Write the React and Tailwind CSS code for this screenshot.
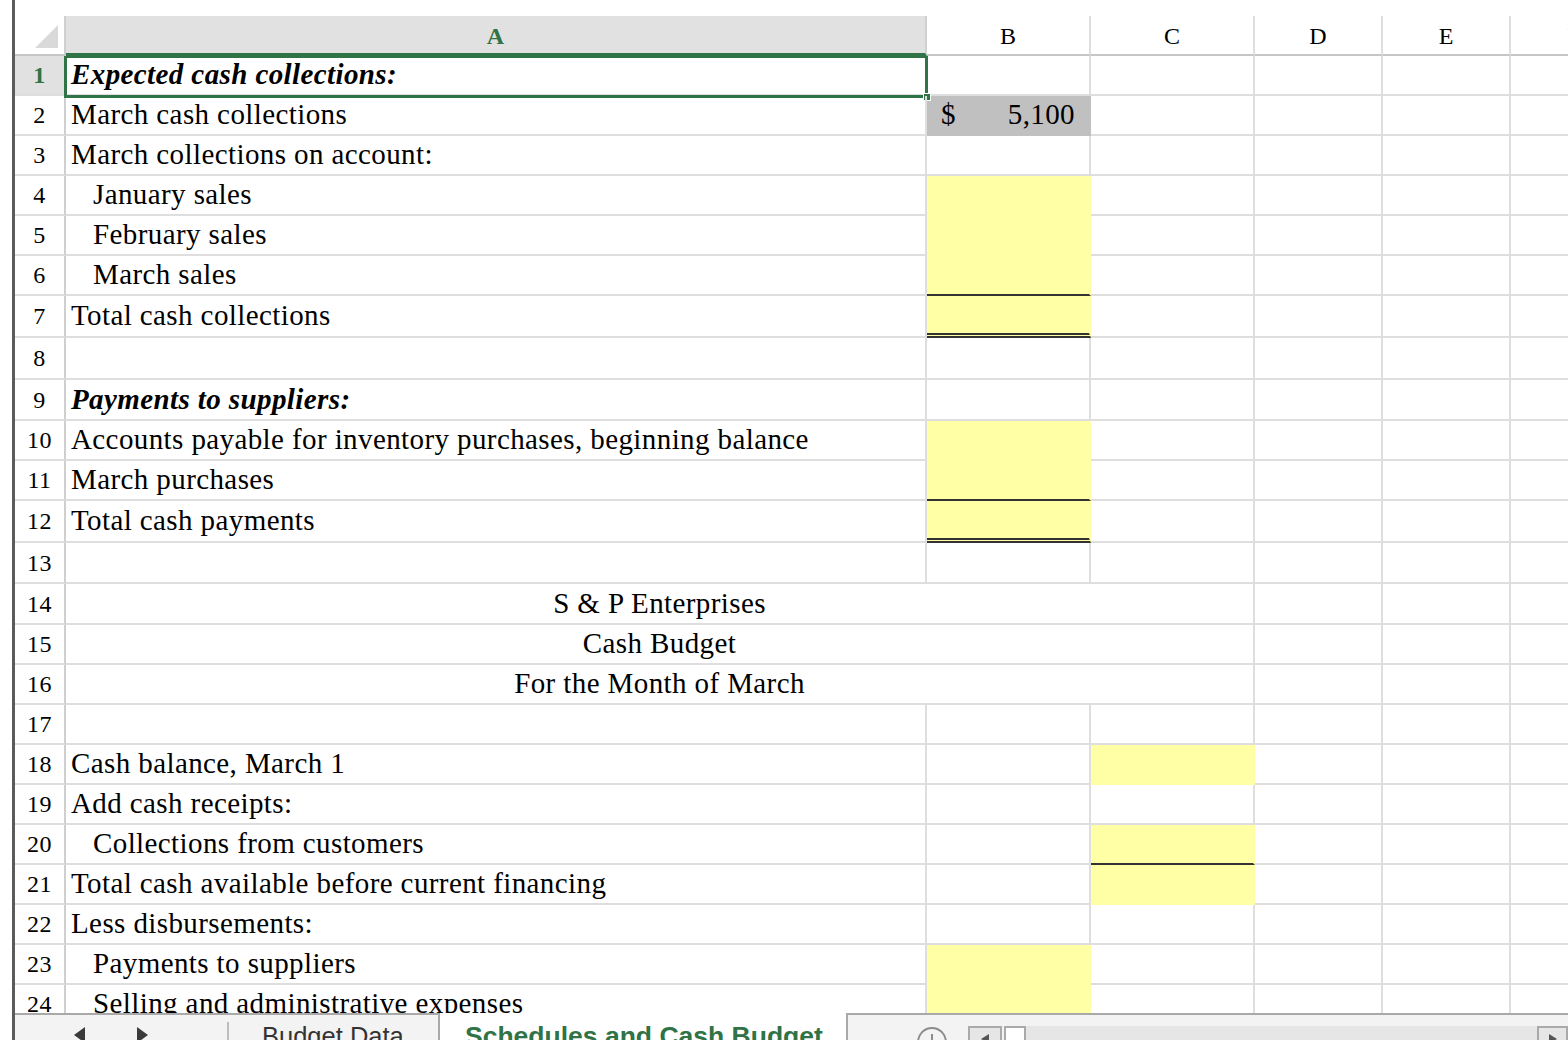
import React from 'react';

const YELLOW = 'bg-[#ffffa6]';

// row data: h = row height incl. bottom gridline
const rows = [
  { n: 1, h: 40, a: 'Expected cash collections:', bi: true },
  { n: 2, h: 40, a: 'March cash collections', b: { fill: 'gray', amount: '5,100' } },
  { n: 3, h: 40, a: 'March collections on account:' },
  { n: 4, h: 40, a: 'January sales', indent: true, b: { fill: 'yellow', join: true } },
  { n: 5, h: 40, a: 'February sales', indent: true, b: { fill: 'yellow', join: true } },
  { n: 6, h: 40, a: 'March sales', indent: true, b: { fill: 'yellow', line: 'single' } },
  { n: 7, h: 42, a: 'Total cash collections', b: { fill: 'yellow', line: 'double' } },
  { n: 8, h: 42 },
  { n: 9, h: 41, a: 'Payments to suppliers:', bi: true },
  { n: 10, h: 40, a: 'Accounts payable for inventory purchases, beginning balance', b: { fill: 'yellow', join: true } },
  { n: 11, h: 40, a: 'March purchases', b: { fill: 'yellow', line: 'single' } },
  { n: 12, h: 42, a: 'Total cash payments', b: { fill: 'yellow', line: 'double' } },
  { n: 13, h: 41 },
  { n: 14, h: 41, merged: 'S & P Enterprises' },
  { n: 15, h: 40, merged: 'Cash Budget' },
  { n: 16, h: 40, merged: 'For the Month of March' },
  { n: 17, h: 40 },
  { n: 18, h: 40, a: 'Cash balance, March 1', c: { fill: 'yellow' } },
  { n: 19, h: 40, a: 'Add cash receipts:' },
  { n: 20, h: 40, a: 'Collections from customers', indent: true, c: { fill: 'yellow', line: 'single' } },
  { n: 21, h: 40, a: 'Total cash available before current financing', c: { fill: 'yellow' } },
  { n: 22, h: 40, a: 'Less disbursements:' },
  { n: 23, h: 40, a: 'Payments to suppliers', indent: true, b: { fill: 'yellow', join: true } },
  { n: 24, h: 40, a: 'Selling and administrative expenses', indent: true, b: { fill: 'yellow', join: true } },
];

function ValueCell({ width, spec }) {
  if (!spec) {
    return <div className={`${width} shrink-0 border-r-2 border-b-2 border-[#dedede]`} />;
  }
  let cls = `${width} shrink-0 flex items-center justify-between px-[14px] border-r-2 border-b-2 text-[29px] tracking-[0.4px]`;
  if (spec.fill === 'gray') cls += ' bg-[#c0c0c0] border-[#c0c0c0]';
  if (spec.fill === 'yellow') cls += ` ${YELLOW} border-r-[#ffffa6]`;
  if (spec.fill === 'yellow' && !spec.line) cls += ' border-b-[#ffffa6]';
  if (spec.line === 'single') cls += ' border-b-[#333333]';
  if (spec.line === 'double') cls += ' border-b-[5px] border-double border-b-[#333333]';
  return (
    <div className={cls}>
      {spec.amount ? (
        <>
          <span>$</span>
          <span>{spec.amount}</span>
        </>
      ) : null}
    </div>
  );
}

function SheetRow({ row }) {
  const selected = row.n === 1;
  return (
    <div className="flex shrink-0" style={{ height: row.h }}>
      <div
        className={`w-[51px] shrink-0 flex items-center justify-center border-r-2 border-r-[#cfcfcf] border-b-2 border-b-[#dedede] text-[24px] tracking-[0.5px] ${
          selected ? 'bg-[#e1e1e1] text-[#2f7346] font-bold' : 'text-black'
        }`}
      >
        {row.n}
      </div>
      {row.merged ? (
        <div className="w-[1189px] shrink-0 flex items-center justify-center border-r-2 border-b-2 border-[#dedede] text-[29px] tracking-[0.4px]">
          {row.merged}
        </div>
      ) : (
        <>
          <div
            className={`relative w-[861px] shrink-0 flex items-center whitespace-nowrap border-r-2 border-b-2 border-[#dedede] text-[29px] tracking-[0.4px] ${
              row.indent ? 'pl-[27px]' : 'pl-[5px]'
            } ${row.bi ? 'font-bold italic' : ''}`}
          >
            {row.a}
            {selected ? (
              <div className="absolute -left-[2px] -top-[1px] w-[864px] h-[43px] border-[3px] border-[#2f7346]">
                <div className="absolute -right-[6px] -bottom-[6px] w-[8px] h-[8px] bg-[#2f7346] border border-white" />
              </div>
            ) : null}
          </div>
          <ValueCell width="w-[164px]" spec={row.b} />
          <ValueCell width="w-[164px]" spec={row.c} />
        </>
      )}
      <div className="w-[128px] shrink-0 border-r-2 border-b-2 border-[#dedede]" />
      <div className="w-[128px] shrink-0 border-r-2 border-b-2 border-[#dedede]" />
      <div className="w-[128px] shrink-0 border-r-2 border-b-2 border-[#dedede]" />
    </div>
  );
}

function HeaderRow() {
  const cols = [
    ['B', 'w-[164px]'],
    ['C', 'w-[164px]'],
    ['D', 'w-[128px]'],
    ['E', 'w-[128px]'],
    ['F', 'w-[128px]'],
  ];
  return (
    <div className="flex h-[40px] shrink-0 text-[24px]">
      <div className="relative w-[51px] shrink-0 border-r-2 border-r-[#cfcfcf] border-b-2 border-b-[#c6c6c6]">
        <svg className="absolute left-[20px] top-[9px]" width="24" height="24" viewBox="0 0 24 24">
          <polygon points="0,23 23,23 23,0" fill="#d9d9d9" />
        </svg>
      </div>
      <div className="w-[861px] shrink-0 flex items-center justify-center pt-[2px] bg-[#e1e1e1] border-r-2 border-r-[#d0d0d0] border-b-[3px] border-b-[#2f7346] font-bold text-[#2f7346]">
        A
      </div>
      {cols.map(([l, w]) => (
        <div
          key={l}
          className={`${w} shrink-0 flex items-center justify-center pt-[2px] border-r-2 border-r-[#dedede] border-b-2 border-b-[#c6c6c6]`}
        >
          {l}
        </div>
      ))}
    </div>
  );
}

function TabBar() {
  return (
    <div className="flex h-[27px] shrink-0 font-['Liberation_Sans',Arial,sans-serif] overflow-hidden">
      <div className="w-[423px] shrink-0 flex bg-[#f3f3f3] border-t-2 border-[#a9a9a9]">
        <div className="w-[212px] shrink-0 flex items-start pt-[12px]">
          <svg className="ml-[59px]" width="12" height="16" viewBox="0 0 12 16">
            <polygon points="11,0 11,16 0,8" fill="#3a3a3a" />
          </svg>
          <svg className="ml-[50px]" width="12" height="16" viewBox="0 0 12 16">
            <polygon points="1,0 1,16 12,8" fill="#3a3a3a" />
          </svg>
        </div>
        <div className="mt-[7px] border-l-2 border-[#bdbdbd]" />
        <div className="pl-[33px] pt-[9px] text-[25.5px] leading-none text-[#333333] whitespace-nowrap">
          Budget Data
        </div>
      </div>
      <div className="w-[410px] shrink-0 bg-white border-l-2 border-r-2 border-[#a9a9a9] pl-[25px] pt-[10px] text-[26.5px] leading-none font-bold text-[#2f7346] whitespace-nowrap">
        Schedules and Cash Budget
      </div>
      <div className="flex-1 flex items-start bg-[#f3f3f3] border-t-2 border-[#a9a9a9]">
        <svg className="ml-[68px] mt-[10px] shrink-0" width="32" height="32" viewBox="0 0 32 32">
          <circle cx="16" cy="17" r="14" fill="none" stroke="#8c8c8c" strokeWidth="2" />
          <line x1="16" y1="9" x2="16" y2="25" stroke="#8c8c8c" strokeWidth="2" />
          <line x1="8" y1="17" x2="24" y2="17" stroke="#8c8c8c" strokeWidth="2" />
        </svg>
        <div className="ml-[20px] mt-[11px] flex flex-1 h-[20px]">
          <div className="w-[34px] shrink-0 flex items-start justify-center pt-[6px] bg-[#e6e6e6] border-2 border-[#aaaaaa]">
            <svg width="8" height="10" viewBox="0 0 8 10">
              <polygon points="8,0 8,10 0,5" fill="#555" />
            </svg>
          </div>
          <div className="w-[22px] shrink-0 bg-white border-2 border-[#aaaaaa] ml-[2px]" />
          <div className="flex-1 bg-[#e6e6e6]" />
          <div className="w-[31px] shrink-0 flex items-start justify-center pt-[6px] bg-[#e6e6e6] border-2 border-[#aaaaaa]">
            <svg width="8" height="10" viewBox="0 0 8 10">
              <polygon points="0,0 0,10 8,5" fill="#555" />
            </svg>
          </div>
        </div>
      </div>
    </div>
  );
}

export default function App() {
  return (
    <div className="w-[1568px] h-[1040px] flex overflow-hidden bg-white text-black font-['Liberation_Serif','Times_New_Roman',serif]">
      <div className="w-[12px] shrink-0 bg-white" />
      <div className="w-[3px] shrink-0 bg-[#5b5b5b]" />
      <div className="w-[1553px] shrink-0 flex flex-col overflow-hidden">
        <div className="h-[16px] shrink-0" />
        <HeaderRow />
        <div className="h-[957px] shrink-0 flex flex-col overflow-hidden">
          {rows.map((r) => (
            <SheetRow key={r.n} row={r} />
          ))}
        </div>
        <TabBar />
      </div>
    </div>
  );
}
